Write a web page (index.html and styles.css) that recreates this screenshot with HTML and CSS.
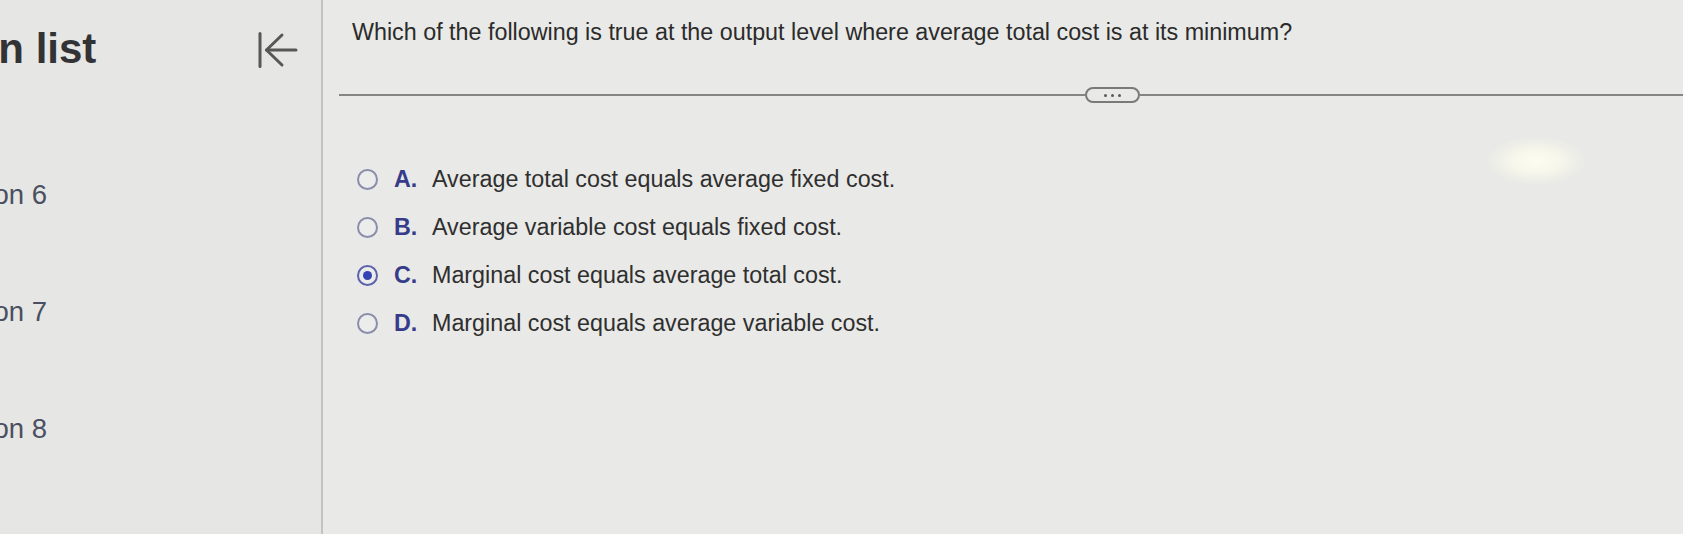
FILE: index.html
```html
<!DOCTYPE html>
<html lang="en">
<head>
<meta charset="utf-8">
<title>Question</title>
<link rel="stylesheet" href="styles.css">
</head>
<body>
<aside class="sidebar">
  <div class="sidebar-head">
    <h2 class="sidebar-title">Question list</h2>
    <button class="collapse-btn" aria-label="Collapse question list">
      <svg width="40" height="36" viewBox="0 0 40 36" fill="none" stroke="#575757" stroke-width="3" stroke-linecap="round" stroke-linejoin="round">
        <path d="M2 1.5 V34.5"/>
        <path d="M8.5 18 H38"/>
        <path d="M24 3 L8.5 18 L24 33"/>
      </svg>
    </button>
  </div>
  <ul class="qlist">
    <li class="qitem">Question 6</li>
    <li class="qitem">Question 7</li>
    <li class="qitem">Question 8</li>
    <li class="qitem">Question 9</li>
  </ul>
</aside>
<main class="main">
  <p class="question">Which of the following is true at the output level where average total cost is at its minimum?</p>
  <div class="separator">
    <span class="sep-line sep-left"></span>
    <span class="sep-pill"><i></i><i></i><i></i></span>
    <span class="sep-line sep-right"></span>
  </div>
  <ul class="options">
    <li class="option"><span class="radio"></span><span class="letter">A.</span><span class="opt-text">Average total cost equals average fixed cost.</span></li>
    <li class="option"><span class="radio"></span><span class="letter">B.</span><span class="opt-text">Average variable cost equals fixed cost.</span></li>
    <li class="option"><span class="radio checked"></span><span class="letter">C.</span><span class="opt-text">Marginal cost equals average total cost.</span></li>
    <li class="option"><span class="radio"></span><span class="letter">D.</span><span class="opt-text">Marginal cost equals average variable cost.</span></li>
  </ul>
</main>
</body>
</html>
```

FILE: styles.css
```css
html, body {
  margin: 0;
  padding: 0;
}
body {
  width: 1683px;
  height: 534px;
  overflow: hidden;
  display: flex;
  font-family: "Liberation Sans", Arial, sans-serif;
  background: #e8e8e6;
  color: #2f2f2f;
}
.sidebar {
  width: 321px;
  flex: none;
  border-right: 2px solid #c3c3c1;
  background: #e6e6e4;
  overflow: hidden;
}
.sidebar-head {
  display: flex;
  align-items: center;
  justify-content: space-between;
  padding: 25px 23px 0 0;
  height: 48px;
}
.sidebar-title {
  margin: 0 0 0 -158px;
  font-size: 42px;
  line-height: 48px;
  font-weight: 700;
  color: #333336;
  white-space: nowrap;
}
.collapse-btn {
  border: 0;
  background: none;
  padding: 0;
  margin-top: 2px;
  display: flex;
}
.qlist {
  list-style: none;
  margin: 107px 0 0 -86px;
  padding: 0;
  display: flex;
  flex-direction: column;
  gap: 87px;
}
.qitem {
  font-size: 27.5px;
  line-height: 30px;
  color: #4a5061;
  white-space: nowrap;
}
.main {
  flex: 1;
  padding: 18px 0 0 16px;
  background:
    radial-gradient(ellipse 50px 24px at 1213px 161px, #fcfcf1 0%, #f7f7eb 45%, rgba(240,240,232,0) 100%),
    #e9e9e7;
}
.question {
  margin: 0;
  padding-left: 13px;
  font-size: 23.3px;
  line-height: 28px;
  color: #2b2b2b;
  white-space: nowrap;
}
.separator {
  display: flex;
  align-items: center;
  height: 16px;
  margin-top: 41px;
}
.sep-line {
  height: 2px;
  background: #858585;
}
.sep-left {
  width: 746px;
  flex: none;
}
.sep-right {
  flex: 1;
}
.sep-pill {
  width: 51px;
  height: 12px;
  border: 2px solid #7a7a7a;
  border-radius: 8px;
  display: flex;
  align-items: center;
  justify-content: center;
  gap: 4px;
  flex: none;
}
.sep-pill i {
  width: 3px;
  height: 3px;
  border-radius: 50%;
  background: #5a5a5a;
}
.options {
  list-style: none;
  margin: 52px 0 0;
  padding: 0 0 0 18px;
}
.option {
  display: flex;
  align-items: center;
  height: 48px;
  font-size: 23.3px;
}
.radio {
  width: 17px;
  height: 17px;
  border: 2px solid #8a8dac;
  border-radius: 50%;
  background: #ececea;
  flex: none;
  display: flex;
  align-items: center;
  justify-content: center;
}
.radio.checked {
  border-color: #5c63ad;
}
.radio.checked::after {
  content: "";
  width: 9px;
  height: 9px;
  border-radius: 50%;
  background: #3444b4;
}
.letter {
  margin-left: 16px;
  width: 23px;
  font-weight: 700;
  color: #363c8a;
}
.opt-text {
  margin-left: 15px;
  color: #2f2f2f;
  white-space: nowrap;
}
```
